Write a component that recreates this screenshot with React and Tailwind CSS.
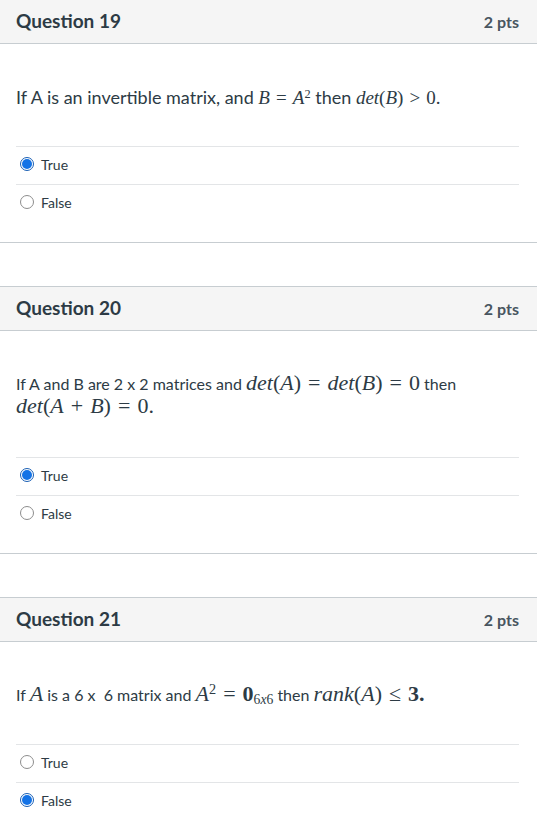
import React from 'react';

const serif = "font-['Liberation_Serif','DejaVu_Serif',serif] leading-none";

const V = ({ children }) => <span className="italic">{children}</span>;
const Op = ({ children }) => <span className="mx-[0.32em]">{children}</span>;
const M = ({ size, children }) => <span className={`${serif} ${size}`}>{children}</span>;

const Radio = ({ checked }) =>
  checked ? (
    <span className="w-[14px] h-[14px] rounded-full border border-[#1a5fb4] bg-white flex items-center justify-center">
      <span className="w-[10px] h-[10px] rounded-full bg-[#1473e6]"></span>
    </span>
  ) : (
    <span className="w-[14px] h-[14px] rounded-full border border-[#8d8d8d] bg-white"></span>
  );

const questions = [
  {
    title: 'Question 19',
    answer: 'True',
    size: 'text-[18px] leading-[24px] mb-[37px]',
    text: (
      <>
        If A is an invertible matrix, and{' '}
        <M size="text-[19px]">
          <V>B</V>
          <Op>=</Op>
          <V>A</V>
          <sup className="text-[0.65em]">2</sup>
        </M>{' '}
        then{' '}
        <M size="text-[19px]">
          <V>det</V>(<V>B</V>)<Op>&gt;</Op>0.
        </M>
      </>
    ),
  },
  {
    title: 'Question 20',
    answer: 'True',
    size: 'text-[16px] leading-[22px] mb-[39px]',
    text: (
      <>
        If A and B are 2 x 2 matrices and{' '}
        <M size="text-[22px]">
          <V>det</V>(<V>A</V>)<Op>=</Op>
          <V>det</V>(<V>B</V>)<Op>=</Op>0
        </M>{' '}
        then
        <br />
        <M size="text-[22px]">
          <V>det</V>(<V>A</V>
          <Op>+</Op>
          <V>B</V>)<Op>=</Op>0.
        </M>
      </>
    ),
  },
  {
    title: 'Question 21',
    answer: 'False',
    size: 'text-[16px] leading-[22px] mb-[38px]',
    text: (
      <>
        If{' '}
        <M size="text-[22px]">
          <V>A</V>
        </M>{' '}
        is a 6 x &nbsp;6 matrix and{' '}
        <M size="text-[22px]">
          <V>A</V>
          <sup className="text-[0.65em]">2</sup>
          <Op>=</Op>
          <span className="font-bold">0</span>
          <sub className="text-[0.62em]">
            6<V>x</V>6
          </sub>
        </M>{' '}
        then{' '}
        <M size="text-[22px]">
          <V>rank</V>(<V>A</V>)<Op>≤</Op>
          <span className="font-bold">3.</span>
        </M>
      </>
    ),
  },
];

export default function App() {
  return (
    <div className="bg-white min-h-screen font-['Lato','Noto_Sans',sans-serif] text-[#2d3b45]">
      {questions.map((q, i) => (
        <div
          key={q.title}
          className={`border-b border-[#c7cdd1] ${i > 0 ? 'mt-[43px] border-t' : ''}`}
        >
          <div className="h-[44px] bg-[#f5f5f5] border-b border-[#c7cdd1] flex items-center justify-between pl-4 pr-[18px]">
            <h3 className="text-[19px] font-bold">{q.title}</h3>
            <span className="text-[16px] font-bold text-[#485560]">2 pts</span>
          </div>
          <div className="px-4 pt-[41px] pb-5">
            <div className={q.size}>{q.text}</div>
            <div className="mr-[2px]">
              {['True', 'False'].map((a) => (
                <div
                  key={a}
                  className="h-[38px] border-t border-[#e3e5e7] flex items-center pl-1 pb-[3px] gap-[7px]"
                >
                  <Radio checked={a === q.answer} />
                  <span className="text-[14px] text-[#2d3b45]">{a}</span>
                </div>
              ))}
            </div>
          </div>
        </div>
      ))}
    </div>
  );
}
